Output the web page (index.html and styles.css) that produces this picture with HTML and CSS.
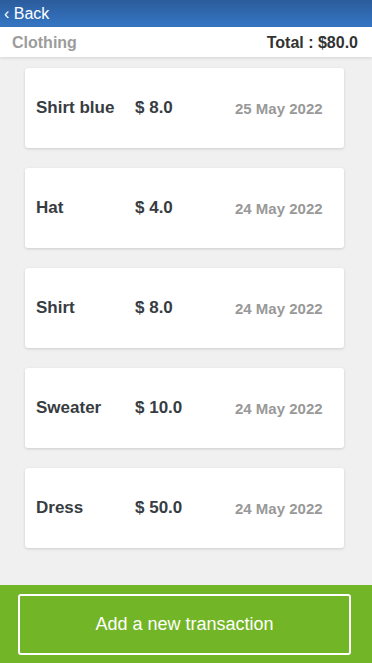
FILE: index.html
```html
<!DOCTYPE html>
<html>
<head>
<meta charset="utf-8">
<link rel="stylesheet" href="styles.css">
</head>
<body>
<div class="app">
  <header class="topbar"><span class="back">‹ Back</span></header>
  <div class="subbar">
    <span class="category">Clothing</span>
    <span class="total">Total : $80.0</span>
  </div>
  <main class="list">
    <div class="card"><span class="name">Shirt blue</span><span class="price">$ 8.0</span><span class="date">25 May 2022</span></div>
    <div class="card"><span class="name">Hat</span><span class="price">$ 4.0</span><span class="date">24 May 2022</span></div>
    <div class="card"><span class="name">Shirt</span><span class="price">$ 8.0</span><span class="date">24 May 2022</span></div>
    <div class="card"><span class="name">Sweater</span><span class="price">$ 10.0</span><span class="date">24 May 2022</span></div>
    <div class="card"><span class="name">Dress</span><span class="price">$ 50.0</span><span class="date">24 May 2022</span></div>
  </main>
  <footer class="footer"><div class="add-btn">Add a new transaction</div></footer>
</div>
</body>
</html>
```
FILE: styles.css
```css
* { box-sizing: border-box; }
html, body { margin: 0; padding: 0; }
body { font-family: "Liberation Sans", Arial, sans-serif; background: #f0f0f0; }
.app { width: 372px; height: 663px; display: flex; flex-direction: column; overflow: hidden; }
.topbar {
  height: 27px;
  background: linear-gradient(#2c5c9c, #3476c4);
  color: #fff;
  font-size: 16px;
  display: flex;
  align-items: center;
  padding-left: 4px;
  flex-shrink: 0;
}
.subbar {
  height: 30px;
  background: #fff;
  display: flex;
  justify-content: space-between;
  align-items: center;
  padding: 1px 14px 0 12px;
  font-weight: bold;
  font-size: 16px;
  box-shadow: 0 1px 3px rgba(0,0,0,0.12);
  position: relative;
  flex-shrink: 0;
}
.category { color: #9c9c9c; }
.total { color: #333; }
.list {
  flex: 1;
  padding: 11px 0 0 25px;
  display: flex;
  flex-direction: column;
  gap: 20px;
}
.card {
  width: 319px;
  height: 80px;
  background: #fff;
  border-radius: 3px;
  box-shadow: 0 1px 3px rgba(0,0,0,0.15);
  display: flex;
  align-items: center;
  padding-left: 11px;
  font-weight: bold;
}
.name { width: 99px; font-size: 17px; color: #373c42; padding-bottom: 1px; }
.price { width: 100px; font-size: 17px; color: #373c42; padding-bottom: 1px; }
.date { font-size: 15px; color: #999; padding-top: 1px; }
.footer {
  height: 78px;
  background: #72b526;
  padding: 9px 21px 8px 18px;
  flex-shrink: 0;
}
.add-btn {
  height: 61px;
  border: 2px solid #fff;
  border-radius: 3px;
  display: flex;
  align-items: center;
  justify-content: center;
  color: #fff;
  font-size: 18px;
}
```
